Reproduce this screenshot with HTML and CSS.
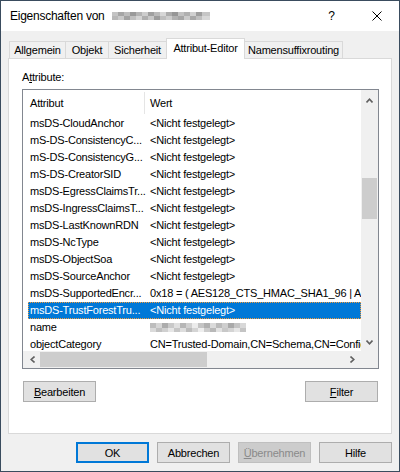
FILE: index.html
```html
<!DOCTYPE html>
<html lang="de">
<head>
<meta charset="utf-8">
<title>Eigenschaften</title>
<link rel="stylesheet" href="styles.css">
</head>
<body>
<div class="window">
  <div class="titlebar">
    <span class="title">Eigenschaften von</span>
    <span class="blur title-blur"></span>
    <span class="cap help">?</span>
    <span class="cap close"><svg width="10" height="10" viewBox="0 0 10 10"><path d="M0.5 0.5 L9.5 9.5 M9.5 0.5 L0.5 9.5" stroke="#000" stroke-width="1" fill="none"/></svg></span>
  </div>
  <div class="tabs">
    <div class="tab tab-first w-allg">Allgemein</div>
    <div class="tab w-obj">Objekt</div>
    <div class="tab w-sich">Sicherheit</div>
    <div class="tab tab-active w-attr">Attribut-Editor</div>
    <div class="tab w-nam">Namensuffixrouting</div>
  </div>
  <div class="panel">
    <div class="label">A<u>t</u>tribute:</div>
    <div class="listbox">
      <div class="viewport">
        <div class="header"><div class="hcol1">Attribut</div><div class="hdiv"></div><div class="hcol2">Wert</div></div>
        <div class="row"><span class="c1">msDS-CloudAnchor</span><span class="c2">&lt;Nicht festgelegt&gt;</span></div>
        <div class="row"><span class="c1">mS-DS-ConsistencyC...</span><span class="c2">&lt;Nicht festgelegt&gt;</span></div>
        <div class="row"><span class="c1">mS-DS-ConsistencyG...</span><span class="c2">&lt;Nicht festgelegt&gt;</span></div>
        <div class="row"><span class="c1">mS-DS-CreatorSID</span><span class="c2">&lt;Nicht festgelegt&gt;</span></div>
        <div class="row"><span class="c1">msDS-EgressClaimsTr...</span><span class="c2">&lt;Nicht festgelegt&gt;</span></div>
        <div class="row"><span class="c1">msDS-IngressClaimsT...</span><span class="c2">&lt;Nicht festgelegt&gt;</span></div>
        <div class="row"><span class="c1">msDS-LastKnownRDN</span><span class="c2">&lt;Nicht festgelegt&gt;</span></div>
        <div class="row"><span class="c1">msDS-NcType</span><span class="c2">&lt;Nicht festgelegt&gt;</span></div>
        <div class="row"><span class="c1">msDS-ObjectSoa</span><span class="c2">&lt;Nicht festgelegt&gt;</span></div>
        <div class="row"><span class="c1">msDS-SourceAnchor</span><span class="c2">&lt;Nicht festgelegt&gt;</span></div>
        <div class="row"><span class="c1">msDS-SupportedEncr...</span><span class="c2">0x18 = ( AES128_CTS_HMAC_SHA1_96 | AES256_CTS_HMAC_SHA1_96 )</span></div>
        <div class="row sel"><span class="c1">msDS-TrustForestTru...</span><span class="c2">&lt;Nicht festgelegt&gt;</span></div>
        <div class="row"><span class="c1">name</span><span class="c2"><span class="blur name-blur"></span></span></div>
        <div class="row"><span class="c1">objectCategory</span><span class="c2">CN=Trusted-Domain,CN=Schema,CN=Configuration,DC=example,DC=local</span></div>
      </div>
      <div class="vscroll">
        <div class="sbtn sbtn-up"><svg width="7" height="5" viewBox="0 0 7 5"><polyline points="0.5,4.5 3.5,1.2 6.5,4.5" fill="none" stroke="#606060" stroke-width="1.6"/></svg></div>
        <div class="vtrack"><div class="vthumb"></div></div>
        <div class="sbtn"><svg width="7" height="5" viewBox="0 0 7 5"><polyline points="0.5,0.5 3.5,3.8 6.5,0.5" fill="none" stroke="#606060" stroke-width="1.6"/></svg></div>
      </div>
      <div class="hscroll">
        <div class="sbtn sbtn-left"><svg width="5" height="7" viewBox="0 0 5 7"><polyline points="4.5,0.5 1.2,3.5 4.5,6.5" fill="none" stroke="#606060" stroke-width="1.6"/></svg></div>
        <div class="htrack"><div class="hthumb"></div></div>
        <div class="sbtn"><svg width="5" height="7" viewBox="0 0 5 7"><polyline points="0.5,0.5 3.8,3.5 0.5,6.5" fill="none" stroke="#606060" stroke-width="1.6"/></svg></div>
      </div>
      <div class="corner"></div>
    </div>
    <div class="actions">
      <button class="btn btn-edit"><u>B</u>earbeiten</button>
      <button class="btn btn-filter"><u>F</u>ilter</button>
    </div>
  </div>
  <div class="footer">
    <button class="btn btn-default">OK</button>
    <button class="btn">Abbrechen</button>
    <button class="btn btn-disabled"><u>Ü</u>bernehmen</button>
    <button class="btn">Hilfe</button>
  </div>
</div>
</body>
</html>
```

FILE: styles.css
```css
* { box-sizing: border-box; }
html, body { margin: 0; padding: 0; }
body {
  width: 400px;
  height: 472px;
  background: #f0f0f0;
  font-family: "Liberation Sans", Arial, sans-serif;
  font-size: 11px;
  letter-spacing: -0.2px;
  color: #000;
}
.window {
  width: 400px;
  height: 472px;
  border: 1px solid #3a4c5e;
  background: #f0f0f0;
  display: flex;
  flex-direction: column;
}
.titlebar {
  flex: none;
  height: 30px;
  background: #fff;
  display: flex;
  align-items: center;
  padding-left: 9px;
}
.title { font-size: 12px; letter-spacing: -0.25px; }
.blur { display: inline-block; }
.title-blur {
  width: 98px;
  height: 8px;
  margin-left: 7px;
  background:
    linear-gradient(90deg, #c4c4c4 0 6px, #a6a6a6 6px 12px, #bdbdbd 12px 18px, #9a9a9a 18px 24px, #b4b4b4 24px 30px, #cdcdcd 30px 36px, #a0a0a0 36px 42px, #bababa 42px 48px, #d6d6d6 48px 54px, #acacac 54px 60px, #979797 60px 66px, #c2c2c2 66px 72px, #b0b0b0 72px 78px, #d0d0d0 78px 84px, #9e9e9e 84px 90px, #c6c6c6 90px 98px) top / 100% 4px no-repeat,
    linear-gradient(90deg, #b8b8b8 0 6px, #cacaca 6px 12px, #a3a3a3 12px 18px, #c0c0c0 18px 24px, #d4d4d4 24px 30px, #afafaf 30px 36px, #c8c8c8 36px 42px, #9c9c9c 42px 48px, #bebebe 48px 54px, #cdcdcd 54px 60px, #b2b2b2 60px 66px, #a6a6a6 66px 72px, #cbcbcb 72px 78px, #a8a8a8 78px 84px, #bfbfbf 84px 90px, #d8d8d8 90px 98px) bottom / 100% 4px no-repeat;
}
.cap {
  width: 45px;
  height: 30px;
  display: flex;
  align-items: center;
  justify-content: center;
  font-size: 12px;
}
.help { margin-left: auto; }

.tabs {
  flex: none;
  height: 20px;
  margin-top: 7px;
  padding-left: 8px;
  display: flex;
  align-items: flex-end;
  position: relative;
  z-index: 1;
}
.tab {
  height: 17px;
  margin-left: -1px;
  border: 1px solid #d9d9d9;
  border-bottom: none;
  background: #f0f0f0;
  text-align: center;
  line-height: 16px;
  white-space: nowrap;
}
.tab-first { margin-left: 0; }
.tab-active {
  height: 21px;
  margin-bottom: -1px;
  padding-top: 2px;
  line-height: 15px;
  background: #fff;
  position: relative;
  z-index: 2;
}
.w-allg { width: 57px; }
.w-obj { width: 44px; }
.w-sich { width: 59px; }
.w-attr { width: 79px; }
.w-nam { width: 99px; }

.panel {
  flex: none;
  height: 376px;
  margin: 0 7px;
  background: #fff;
  border: 1px solid #d9d9d9;
  padding: 12px 12px 0 13px;
}
.label { line-height: 13px; }
.listbox {
  margin-top: 5px;
  width: 357px;
  height: 280px;
  border: 1px solid #828790;
  display: grid;
  grid-template-columns: 338px 17px;
  grid-template-rows: 261px 17px;
}
.viewport {
  overflow: hidden;
  background: #fff;
}
.header {
  height: 25px;
  display: flex;
  align-items: center;
  white-space: nowrap;
}
.hcol1 { width: 121px; padding-left: 7px; flex: none; }
.hdiv {
  flex: none;
  width: 1px;
  height: 22px;
  align-self: flex-start;
  margin-top: 2px;
  background: #e5e5e5;
}
.hcol2 { padding-left: 5px; }
.row {
  display: flex;
  height: 17px;
  line-height: 17px;
  margin-left: 5px;
  width: 333px;
  white-space: nowrap;
  overflow: hidden;
}
.c1 {
  flex: none;
  width: 122px;
  padding-left: 2px;
  overflow: hidden;
}
.c2 { flex: none; }
.row.sel {
  background: #0078d7;
  color: #fff;
  outline: 1px dotted #f39c3c;
  outline-offset: -1px;
}
.name-blur {
  width: 96px;
  height: 9px;
  vertical-align: -1px;
  background:
    linear-gradient(90deg, #bdbdbd 0 6px, #d6d6d6 6px 12px, #acacac 12px 18px, #c9c9c9 18px 24px, #e0e0e0 24px 30px, #b6b6b6 30px 36px, #d0d0d0 36px 42px, #ececec 42px 48px, #c4c4c4 48px 54px, #b0b0b0 54px 60px, #dadada 60px 66px, #bababa 66px 72px, #cecece 72px 78px, #a9a9a9 78px 84px, #c4c4c4 84px 90px, #d8d8d8 90px 96px) top / 100% 5px no-repeat,
    linear-gradient(90deg, #dadada 0 6px, #c0c0c0 6px 12px, #d0d0d0 12px 18px, #e6e6e6 18px 24px, #c6c6c6 24px 30px, #dddddd 30px 36px, #bcbcbc 36px 42px, #d4d4d4 42px 48px, #eeeeee 48px 54px, #cccccc 54px 60px, #b8b8b8 60px 66px, #e2e2e2 66px 72px, #c8c8c8 72px 78px, #d4d4d4 78px 84px, #e6e6e6 84px 90px, #c4c4c4 90px 96px) bottom / 100% 4px no-repeat;
}

.vscroll {
  background: #f0f0f0;
  display: flex;
  flex-direction: column;
}
.hscroll {
  background: #f0f0f0;
  display: flex;
}
.sbtn {
  flex: none;
  width: 17px;
  height: 17px;
  display: flex;
  align-items: center;
  justify-content: center;
}
.sbtn svg { display: block; }
.sbtn-up svg { margin-top: 4px; }
.sbtn-left svg { margin-left: 2px; }
.vtrack { flex: 1; }
.vthumb {
  margin: 71px 1px 0;
  height: 41px;
  background: #cdcdcd;
}
.htrack { flex: 1; }
.hthumb {
  margin-top: 1px;
  width: 167px;
  height: 15px;
  background: #cdcdcd;
}
.corner { background: #f0f0f0; }

.actions {
  margin-top: 12px;
  display: flex;
  justify-content: space-between;
}
.btn {
  width: 73px;
  height: 21px;
  padding: 0;
  border: 1px solid #adadad;
  background: #e1e1e1;
  color: #000;
  font-family: inherit;
  font-size: 11px;
  letter-spacing: -0.2px;
}
.btn u { text-underline-offset: 1px; }
.btn-edit { margin-left: 1px; }
.btn-filter { margin-right: 1px; }
.btn-default { border: 2px solid #0078d7; }
.btn-disabled {
  background: #cccccc;
  border-color: #bfbfbf;
  color: #8a8a8a;
}
.footer {
  flex: none;
  margin-top: 8px;
  padding-right: 7px;
  display: flex;
  justify-content: flex-end;
  gap: 8px;
}
```
